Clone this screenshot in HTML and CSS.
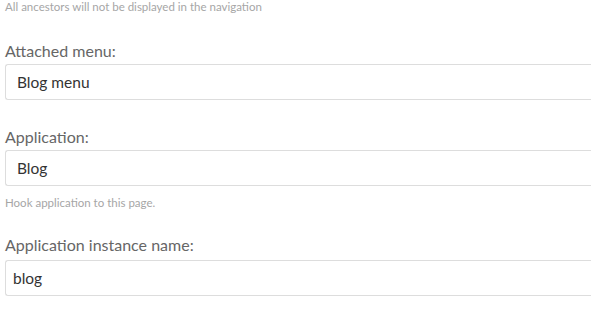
FILE: index.html
```html
<!DOCTYPE html>
<html>
<head>
<meta charset="utf-8">
<link rel="stylesheet" href="styles.css">
</head>
<body>
<div class="form">
  <p class="help help-top">All ancestors will not be displayed in the navigation</p>
  <div class="field field-menu">
    <label class="label">Attached menu:</label>
    <div class="input">Blog menu</div>
  </div>
  <div class="field field-app">
    <label class="label">Application:</label>
    <div class="input">Blog</div>
    <p class="help help-app">Hook application to this page.</p>
  </div>
  <div class="field field-name">
    <label class="label">Application instance name:</label>
    <div class="input">blog</div>
  </div>
</div>
</body>
</html>
```
FILE: styles.css
```css
html, body {
  margin: 0;
  padding: 0;
  background: #fff;
  overflow: hidden;
}
body {
  font-family: Lato, "Open Sans", sans-serif;
}
.form {
  padding-left: 5px;
  display: flex;
  flex-direction: column;
}
.help {
  margin: 0;
  font-size: 11.5px;
  line-height: 14px;
  color: #a6a6a6;
}
.field {
  display: flex;
  flex-direction: column;
}
.field-menu { margin-top: 27px; }
.field-app { margin-top: 27px; }
.field-name { margin-top: 25px; }
.label {
  display: block;
  font-size: 16px;
  line-height: 20px;
  color: #666;
  margin-bottom: 3px;
}
.field-name .label { margin-bottom: 5px; }
.input {
  box-sizing: border-box;
  height: 36px;
  border: 1px solid #ddd;
  border-right: 0;
  border-radius: 3px 0 0 3px;
  padding: 0 11px;
  font-size: 15.5px;
  line-height: 34px;
  color: #333;
}
.field-name .input { padding-left: 7px; }
.help-app { margin-top: 10px; }
```
